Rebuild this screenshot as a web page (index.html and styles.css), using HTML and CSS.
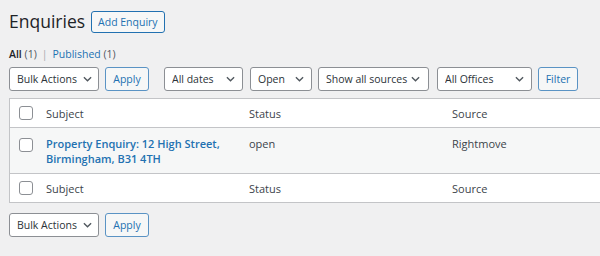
FILE: index.html
```html
<!DOCTYPE html>
<html lang="en">
<head>
<meta charset="utf-8">
<title>Enquiries</title>
<link rel="stylesheet" href="styles.css">
</head>
<body>
<div class="wrap">
  <div class="heading">
    <h1 class="page-title">Enquiries</h1>
    <a class="title-action" href="#">Add Enquiry</a>
  </div>
  <ul class="subsubsub">
    <li><a class="current" href="#">All <span class="count">(1)</span></a></li>
    <li class="sep">|</li>
    <li><a href="#">Published <span class="count">(1)</span></a></li>
  </ul>

  <div class="tablenav top">
    <span class="sel w-bulk"><select><option>Bulk Actions</option></select><svg class="chev" viewBox="0 0 10 6"><path d="M1 1l4 4 4-4"/></svg></span>
    <button class="btn btn-apply">Apply</button>
    <span class="sel w-dates"><select><option>All dates</option></select><svg class="chev" viewBox="0 0 10 6"><path d="M1 1l4 4 4-4"/></svg></span>
    <span class="sel w-open"><select><option>Open</option></select><svg class="chev" viewBox="0 0 10 6"><path d="M1 1l4 4 4-4"/></svg></span>
    <span class="sel w-src"><select><option>Show all sources</option></select><svg class="chev" viewBox="0 0 10 6"><path d="M1 1l4 4 4-4"/></svg></span>
    <span class="sel w-off"><select><option>All Offices</option></select><svg class="chev" viewBox="0 0 10 6"><path d="M1 1l4 4 4-4"/></svg></span>
    <button class="btn btn-filter">Filter</button>
  </div>

  <table class="list">
    <thead>
      <tr>
        <td class="cb"><span class="check"></span></td>
        <th class="col-subject">Subject</th>
        <th class="col-status">Status</th>
        <th class="col-source">Source</th>
      </tr>
    </thead>
    <tbody>
      <tr class="alt">
        <td class="cb"><span class="check"></span></td>
        <td class="col-subject"><a class="row-title" href="#">Property Enquiry: 12 High Street, Birmingham, B31 4TH</a></td>
        <td class="col-status">open</td>
        <td class="col-source">Rightmove</td>
      </tr>
    </tbody>
    <tfoot>
      <tr>
        <td class="cb"><span class="check"></span></td>
        <th class="col-subject">Subject</th>
        <th class="col-status">Status</th>
        <th class="col-source">Source</th>
      </tr>
    </tfoot>
  </table>

  <div class="tablenav bottom">
    <span class="sel w-bulk"><select><option>Bulk Actions</option></select><svg class="chev" viewBox="0 0 10 6"><path d="M1 1l4 4 4-4"/></svg></span>
    <button class="btn btn-apply">Apply</button>
  </div>
</div>
</body>
</html>
```

FILE: styles.css
```css
html, body {
  margin: 0;
  padding: 0;
  background: #f0f0f1;
  overflow: hidden;
}
body {
  font-family: "Open Sans", "Noto Sans", sans-serif;
  font-size: 11px;
  color: #3c434a;
  width: 600px;
}
.wrap {
  padding: 8px 0 0 9px;
}
.heading {
  display: flex;
  align-items: center;
  gap: 6px;
  height: 26px;
}
.page-title {
  margin: 0;
  font-size: 17.5px;
  font-weight: 400;
  color: #1d2327;
  line-height: 26px;
}
.title-action {
  display: inline-flex;
  align-items: center;
  height: 20px;
  padding: 0 6px;
  border: 1px solid #2271b1;
  border-radius: 3px;
  background: #f6f7f7;
  color: #2271b1;
  font-size: 10.5px;
  font-weight: 500;
  text-decoration: none;
  margin-top: 2px;
}
.subsubsub {
  list-style: none;
  margin: 12px 0 0 0;
  padding: 0;
  display: flex;
  gap: 4px;
  line-height: 16px;
  font-size: 10.5px;
  color: #50575e;
}
.subsubsub a {
  color: #2271b1;
  text-decoration: none;
}
.subsubsub a.current {
  color: #1d2327;
  font-weight: 600;
}
.subsubsub .count {
  color: #50575e;
  font-weight: 400;
}
.subsubsub .sep {
  color: #a7aaad;
  padding: 0 1px;
}
.tablenav {
  display: flex;
  align-items: center;
  height: 24px;
}
.tablenav.top {
  margin-top: 5px;
}
.tablenav.bottom {
  margin-top: 10px;
}
.sel {
  position: relative;
  display: inline-block;
  height: 24px;
}
.sel select {
  appearance: none;
  -webkit-appearance: none;
  box-sizing: border-box;
  width: 100%;
  height: 24px;
  margin: 0;
  padding: 0 6px 0 7px;
  border: 1px solid #8c8f94;
  border-radius: 3px;
  background: #fff;
  font-family: inherit;
  font-size: 10.5px;
  color: #2c3338;
  line-height: 22px;
}
.chev {
  position: absolute;
  top: 9px;
  right: 8px;
  width: 9px;
  height: 6px;
  fill: none;
  stroke: #50575e;
  stroke-width: 1.5;
  pointer-events: none;
}
.w-bulk { width: 90px; margin-right: 6px; }
.w-bulk .chev { right: 7px; }
.w-dates { width: 79px; margin-left: 9px; margin-right: 7px; }
.w-open { width: 62px; margin-right: 6px; }
.w-src { width: 111px; margin-right: 8px; }
.w-src .chev { right: 9px; }
.w-off { width: 95px; margin-right: 6px; }
.btn {
  box-sizing: border-box;
  height: 24px;
  padding: 0;
  margin: 0 6px 0 0;
  border: 1px solid #5a93c4;
  border-radius: 3px;
  background: #f6f7f7;
  color: #2271b1;
  font-family: inherit;
  font-size: 10.5px;
  line-height: 22px;
  text-align: center;
}
.btn-apply { width: 44px; }
.btn-filter { width: 40px; }
.list {
  margin-top: 7px;
  width: 620px;
  border: 1px solid #c3c4c7;
  border-collapse: collapse;
  background: #fff;
  table-layout: fixed;
}
.list th, .list td {
  text-align: left;
  font-weight: 400;
  padding: 0 8px;
  vertical-align: middle;
  color: #3c434a;
}
.list thead th, .list thead td, .list tfoot th, .list tfoot td {
  height: 28px;
}
.list thead tr {
  border-bottom: 1px solid #c3c4c7;
}
.list tfoot tr {
  border-top: 1px solid #c3c4c7;
}
.list tbody td {
  vertical-align: top;
  padding-top: 8px;
  padding-bottom: 7px;
  line-height: 15px;
  height: 30px;
}
.list tr.alt {
  background: #f6f7f7;
}
.list .cb {
  width: 19px;
  padding: 0 0 0 9px;
}
.list tbody td.cb {
  padding-top: 10px;
  padding-left: 9px;
}
.col-subject { width: 187px; }
.col-status { width: 187px; }
.check {
  display: block;
  box-sizing: border-box;
  width: 14px;
  height: 14px;
  border: 1px solid #8c8f94;
  border-radius: 3px;
  background: #fff;
}
.row-title {
  color: #2271b1;
  font-weight: 600;
  text-decoration: none;
  font-size: 11px;
}
```
